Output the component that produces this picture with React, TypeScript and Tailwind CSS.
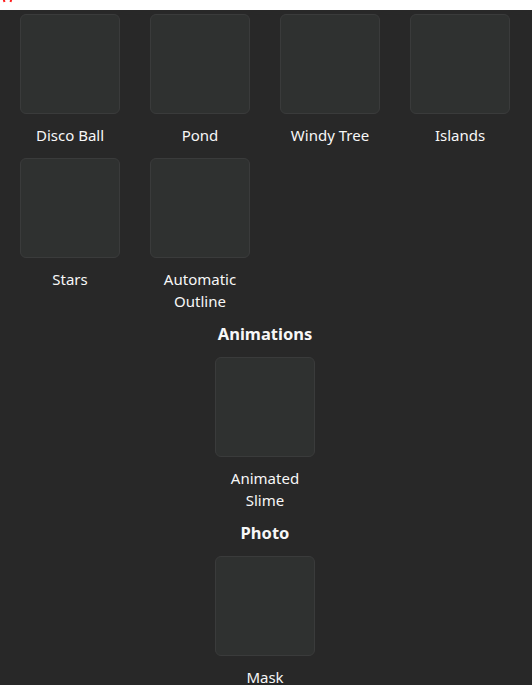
import React from 'react';

type Effect = { name: string };

const SECTIONS: { title?: string; grid: boolean; items: Effect[] }[] = [
  {
    grid: true,
    items: [
      { name: 'Disco Ball' },
      { name: 'Pond' },
      { name: 'Windy Tree' },
      { name: 'Islands' },
      { name: 'Stars' },
      { name: 'Automatic Outline' },
    ],
  },
  { title: 'Animations', grid: false, items: [{ name: 'Animated Slime' }] },
  { title: 'Photo', grid: false, items: [{ name: 'Mask' }] },
];

const EffectTile: React.FC<{ effect: Effect }> = ({ effect }) => (
  <button className="flex flex-col items-center w-[130px] cursor-pointer">
    <div className="w-[100px] h-[100px] rounded-[6px] bg-[#2f3130] border border-[#3a3b3b] hover:border-[#555]" />
    <span className="mt-[10px] w-[110px] text-center text-[15px] leading-[22px] text-[#f7f7f7] break-words">
      {effect.name}
    </span>
  </button>
);

export default function App() {
  return (
    <div className="w-[532px] h-[685px] overflow-hidden bg-[#282828]" style={{ fontFamily: '"Noto Sans", "Open Sans", sans-serif' }}>
      {/* clipped top bar */}
      <div className="h-[10px] bg-white relative overflow-hidden">
        <svg width="16" height="10" viewBox="0 0 16 10" className="absolute left-0 top-0">
          <path d="M3 -3 L4.5 2" stroke="#ff2020" strokeWidth="2" />
          <path d="M12 -3 L10.5 2" stroke="#ff2020" strokeWidth="2" />
        </svg>
      </div>

      <div className="w-[530px] px-[5px] pt-[4px]">
        {SECTIONS.map((section, i) => (
          <section key={i}>
            {section.title && (
              <h3 className="mt-[10px] mb-[11px] text-center text-[16.5px] leading-[24px] font-bold text-[#f7f7f7]">
                {section.title}
              </h3>
            )}
            <div className={section.grid ? 'grid grid-cols-4 gap-y-[12px]' : 'flex flex-wrap justify-center gap-y-[12px]'}>
              {section.items.map((effect) => (
                <EffectTile key={effect.name} effect={effect} />
              ))}
            </div>
          </section>
        ))}
      </div>
    </div>
  );
}
